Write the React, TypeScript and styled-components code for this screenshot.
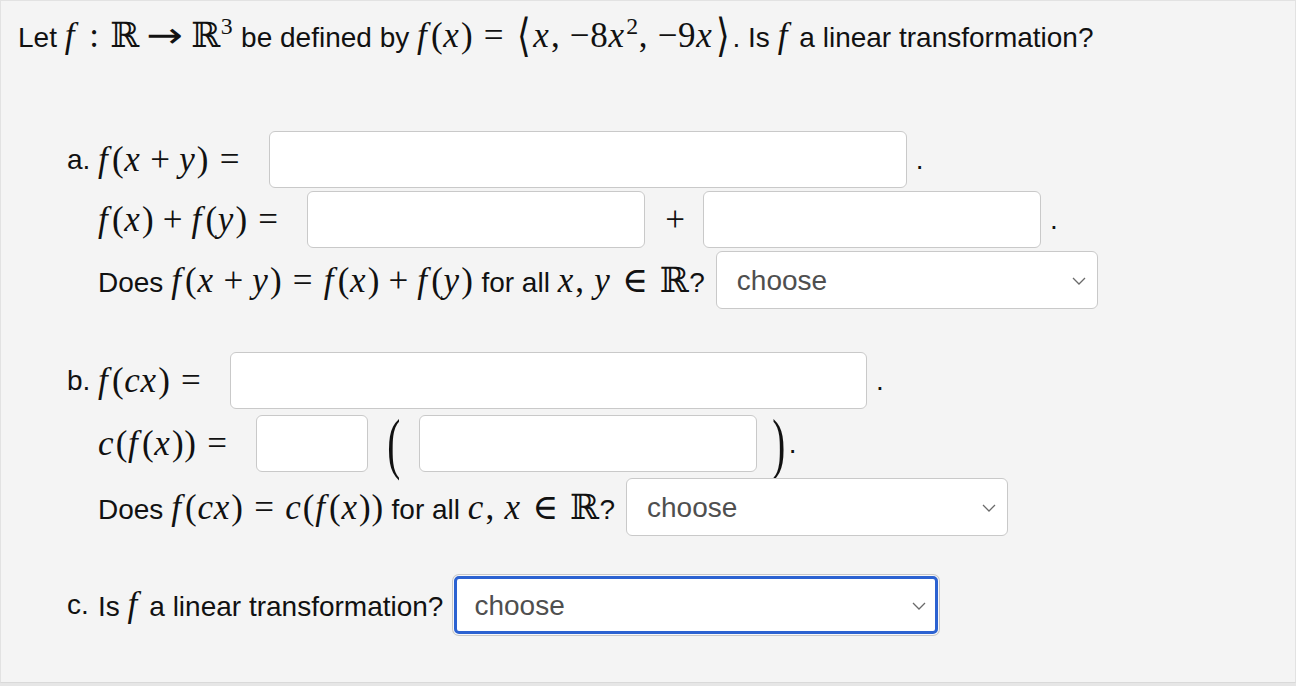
import React from "react";
import styled, { createGlobalStyle, css } from "styled-components";

const GlobalStyle = createGlobalStyle`
  html, body {
    margin: 0;
    padding: 0;
    background: #e6e6e6;
  }
`;

const Page = styled.div`
  box-sizing: border-box;
  height: 683px;
  background: #f4f4f4;
  border: 1px solid #e2e2e2;
  border-bottom-color: #d9d9d9;
  padding: 12px 0 0 17px;
  font-family: "Liberation Sans", Arial, Helvetica, sans-serif;
  font-size: 28px;
  color: #111;
`;

const Prompt = styled.p`
  margin: 0;
  line-height: 44px;
  white-space: nowrap;
`;

const Part = styled.section<{ $top: number }>`
  display: grid;
  grid-template-columns: 31px auto;
  align-items: start;
  margin: ${(p) => p.$top}px 0 0 49px;
`;

const PartLabel = styled.span`
  line-height: 57px;
`;

const Rows = styled.div`
  display: flex;
  flex-direction: column;
  gap: 3px;
`;

const Row = styled.div`
  display: flex;
  align-items: center;
  min-height: 57px;
  white-space: nowrap;
`;

const Phrase = styled.span`
  white-space: pre;
`;

// math bits, roughly what katex would give
const Tex = styled.span`
  font-family: "Liberation Serif", "DejaVu Serif", serif;
  font-size: 1.25em;
  letter-spacing: 0.02em;
  white-space: nowrap;
`;

const V = styled.i`
  font-style: italic;
  padding-right: 0.04em;
`;

const FName = styled.i`
  font-style: italic;
  padding-right: 0.1em;
`;

const Bin = styled.span`
  margin: 0 0.24em;
`;

const Rel = styled.span`
  margin: 0 0.3em;
`;

const Arrow = styled.span`
  display: inline-block;
  margin: 0 0.3em;
  font-family: "DejaVu Sans", sans-serif;
  transform: scaleX(1.25);
`;

const Sup = styled.sup`
  font-size: 0.68em;
  line-height: 0;
  vertical-align: 0.55em;
`;

const Angle = styled.span`
  display: inline-block;
  font-family: "DejaVu Serif", serif;
  transform: scaleY(1.3);
  margin: 0 0.06em;
`;

const BigParen = styled.span<{ $gap: number }>`
  display: inline-block;
  margin-left: ${(p) => p.$gap}px;
  font-family: "Liberation Serif", serif;
  font-size: 46px;
  line-height: 63px;
  transform: scale(0.85, 1.45);
`;

const AnswerBox = styled.input<{ $width: number }>`
  box-sizing: border-box;
  width: ${(p) => p.$width}px;
  height: 57px;
  margin-left: 18px;
  padding: 0 12px;
  border: 1px solid #c9c9c9;
  border-radius: 6px;
  background: #fff;
  font: inherit;
  outline: none;
`;

const Dot = styled.span<{ $gap?: number }>`
  margin-left: ${(p) => p.$gap ?? 9}px;
`;

const PlusSign = styled.span`
  margin: 0 0 0 20px;
  font-family: "Liberation Serif", serif;
  font-size: 1.25em;
`;

const ChoiceWrap = styled.span<{ $width: number }>`
  position: relative;
  display: inline-block;
  width: ${(p) => p.$width}px;
  height: 58px;
  margin-left: 11px;
`;

const Choice = styled.select<{ $focused?: boolean }>`
  appearance: none;
  -webkit-appearance: none;
  box-sizing: border-box;
  width: 100%;
  height: 100%;
  padding: 0 40px 0 20px;
  border: 1px solid #c9c9c9;
  border-radius: 6px;
  background: #fff;
  font: inherit;
  color: #4f4f4f;
  outline: none;
  ${(p) =>
    p.$focused &&
    css`
      padding-left: 17px;
      border: 3px solid #2c62d1;
      border-radius: 5px;
      box-shadow: 0 0 0 1px #f8f8f8, 0 0 0 2px #c8c8c8;
    `}
`;

const Chevron = styled.svg`
  position: absolute;
  right: 12px;
  top: 50%;
  width: 14px;
  height: 8px;
  margin-top: -3px;
  pointer-events: none;
`;

const Select = ({ width, focused }: { width: number; focused?: boolean }) => (
  <ChoiceWrap $width={width}>
    <Choice $focused={focused} defaultValue="choose">
      <option value="choose">choose</option>
      <option value="yes">Yes</option>
      <option value="no">No</option>
    </Choice>
    <Chevron viewBox="0 0 14 8">
      <path d="M1 1 L7 7 L13 1" fill="none" stroke="#6a6a6a" strokeWidth="1.3" />
    </Chevron>
  </ChoiceWrap>
);

const F = () => <FName>f</FName>;

const App = () => {
  return (
    <>
      <GlobalStyle />
      <Page>
        <Prompt>
          Let{" "}
          <Tex>
            <F />
            <Rel>:</Rel>ℝ<Arrow>→</Arrow>ℝ<Sup>3</Sup>
          </Tex>{" "}
          be defined by{" "}
          <Tex>
            <F />(<V>x</V>)<Rel>=</Rel>
            <Angle>⟨</Angle>
            <V>x</V>, −8<V>x</V>
            <Sup>2</Sup>, −9<V>x</V>
            <Angle>⟩</Angle>
          </Tex>
          . Is{" "}
          <Tex>
            <F />
          </Tex>{" "}
          a linear transformation?
        </Prompt>

        <Part $top={71}>
          <PartLabel>a.</PartLabel>
          <Rows>
            <Row>
              <Tex>
                <F />(<V>x</V>
                <Bin>+</Bin>
                <V>y</V>)<Rel>=</Rel>
              </Tex>
              <AnswerBox $width={638} />
              <Dot>.</Dot>
            </Row>
            <Row>
              <Tex>
                <F />(<V>x</V>)<Bin>+</Bin>
                <F />(<V>y</V>)<Rel>=</Rel>
              </Tex>
              <AnswerBox $width={338} />
              <PlusSign>+</PlusSign>
              <AnswerBox $width={338} />
              <Dot>.</Dot>
            </Row>
            <Row>
              <Phrase>
                Does{" "}
                <Tex>
                  <F />(<V>x</V>
                  <Bin>+</Bin>
                  <V>y</V>)<Rel>=</Rel>
                  <F />(<V>x</V>)<Bin>+</Bin>
                  <F />(<V>y</V>)
                </Tex>{" "}
                for all{" "}
                <Tex>
                  <V>x</V>, <V>y</V>
                  <Rel>∈</Rel>ℝ
                </Tex>
                ?
              </Phrase>
              <Select width={382} />
            </Row>
          </Rows>
        </Part>

        <Part $top={43}>
          <PartLabel>b.</PartLabel>
          <Rows>
            <Row>
              <Tex>
                <F />(<V>cx</V>)<Rel>=</Rel>
              </Tex>
              <AnswerBox $width={637} />
              <Dot>.</Dot>
            </Row>
            <Row>
              <Tex>
                <V>c</V>(<F />(<V>x</V>))<Rel>=</Rel>
              </Tex>
              <AnswerBox $width={112} />
              <BigParen $gap={18}>(</BigParen>
              <AnswerBox $width={338} />
              <BigParen $gap={14}>)</BigParen>
              <Dot $gap={2}>.</Dot>
            </Row>
            <Row>
              <Phrase>
                Does{" "}
                <Tex>
                  <F />(<V>cx</V>)<Rel>=</Rel>
                  <V>c</V>(<F />(<V>x</V>))
                </Tex>{" "}
                for all{" "}
                <Tex>
                  <V>c</V>, <V>x</V>
                  <Rel>∈</Rel>ℝ
                </Tex>
                ?
              </Phrase>
              <Select width={382} />
            </Row>
          </Rows>
        </Part>

        <Part $top={40}>
          <PartLabel>c.</PartLabel>
          <Rows>
            <Row>
              <Phrase>
                Is{" "}
                <Tex>
                  <F />
                </Tex>{" "}
                a linear transformation?
              </Phrase>
              <Select width={484} focused />
            </Row>
          </Rows>
        </Part>
      </Page>
    </>
  );
};

export default App;
